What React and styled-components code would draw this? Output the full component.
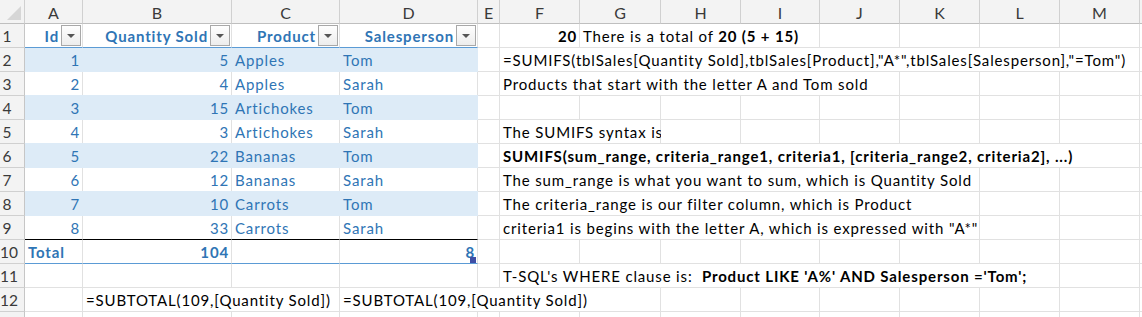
import React from 'react';
import styled, { createGlobalStyle } from 'styled-components';

const GRID = '#e1e1e1';
const BAND = '#ddebf7';
const BLUE = '#2f75b5';
const LINE_BLUE = '#5b9bd5';
const HEAD_BG = '#f3f3f3';
const HEAD_LINE = '#d0d0d0';
const FONT = 'Lato, "Open Sans", "Liberation Sans", sans-serif';

const COLS = [25, 58, 149, 108, 138, 22, 80, 81, 80, 79, 80, 80, 80, 80];
const LETTERS = ['A', 'B', 'C', 'D', 'E', 'F', 'G', 'H', 'I', 'J', 'K', 'L', 'M'];

const Global = createGlobalStyle`
  html, body { margin: 0; padding: 0; background: #fff; overflow: hidden; }
  body { font-family: ${FONT}; }
`;

const Sheet = styled.div`
  display: grid;
  grid-template-columns: ${COLS.map((c) => `${c}px`).join(' ')} 1fr;
  grid-auto-rows: 24px;
  width: 1142px;
  height: 317px;
  overflow: hidden;
  font-family: ${FONT};
`;

const Corner = styled.div`
  position: relative;
  box-sizing: border-box;
  background: ${HEAD_BG};
  border-right: 1px solid ${HEAD_LINE};
  border-bottom: 1px solid #bfbfbf;
  &::after {
    content: '';
    position: absolute;
    right: 3px;
    bottom: 3px;
    border-left: 14px solid transparent;
    border-bottom: 14px solid #d6d6d6;
  }
`;

const ColHead = styled.div`
  box-sizing: border-box;
  background: ${HEAD_BG};
  border-right: 1px solid ${(p) => (p.$last ? HEAD_BG : HEAD_LINE)};
  border-bottom: 1px solid #bfbfbf;
  color: #3a3a3a;
  font-size: 16px;
  line-height: 25px;
  text-align: center;
`;

const RowHead = styled.div`
  box-sizing: border-box;
  background: ${HEAD_BG};
  border-right: 1px solid #c6c6c6;
  border-bottom: 1px solid ${HEAD_LINE};
  color: #3a3a3a;
  font-size: 15.5px;
  line-height: 24px;
  padding-right: 10px;
  text-align: center;
`;

const Cell = styled.div`
  grid-column: span ${(p) => p.$span || 1};
  position: relative;
  box-sizing: border-box;
  min-width: 0;
  background: ${(p) => (p.$band ? BAND : '#fff')};
  border-right: 1px solid ${(p) => (p.$band ? BAND : p.$noRight ? '#fff' : GRID)};
  border-bottom: 1px solid ${(p) => p.$bottom || (p.$band ? BAND : GRID)};
  box-shadow: ${(p) => (p.$cover ? `0 -1px 0 ${BAND}` : 'none')};
  color: ${(p) => (p.$blue ? BLUE : '#000')};
  font-weight: ${(p) => (p.$bold ? 700 : 400)};
  font-size: 15px;
  letter-spacing: 0.85px;
  line-height: 23px;
  padding: 1px 2px 0 3px;
  text-align: ${(p) => p.$align || 'left'};
  white-space: pre;
`;

const HeadCell = styled(Cell)`
  display: flex;
  justify-content: flex-end;
  align-items: flex-start;
  padding: 0 1px 0 0;
`;

const HeadLabel = styled.span`
  padding-top: 1px;
`;

const FilterBtn = styled.span`
  flex-shrink: 0;
  box-sizing: border-box;
  width: 20px;
  height: 21px;
  margin: 1px 0 0 2px;
  border: 1px solid #a8a8a8;
  background: linear-gradient(#fefefe, #ededed);
  display: flex;
  align-items: center;
  justify-content: center;
  &::after {
    content: '';
    border-left: 4px solid transparent;
    border-right: 4px solid transparent;
    border-top: 4px solid #555;
  }
`;

const ResizeHandle = styled.span`
  position: absolute;
  right: 1px;
  bottom: 0;
  width: 6px;
  height: 6px;
  background: #3f4fa6;
`;

const Bold = styled.b`
  font-weight: 700;
`;

const data = [
  [1, 5, 'Apples', 'Tom'],
  [2, 4, 'Apples', 'Sarah'],
  [3, 15, 'Artichokes', 'Tom'],
  [4, 3, 'Artichokes', 'Sarah'],
  [5, 22, 'Bananas', 'Tom'],
  [6, 12, 'Bananas', 'Sarah'],
  [7, 10, 'Carrots', 'Tom'],
  [8, 33, 'Carrots', 'Sarah'],
];

const notes = {
  2: { span: 8, text: '=SUMIFS(tblSales[Quantity Sold],tblSales[Product],"A*",tblSales[Salesperson],"=Tom")' },
  3: { span: 5, text: 'Products that start with the letter A and Tom sold' },
  4: { span: 0 },
  5: { span: 2, text: 'The SUMIFS syntax is' },
  6: { span: 8, bold: true, text: 'SUMIFS(sum_range, criteria_range1, criteria1, [criteria_range2, criteria2], ...)' },
  7: { span: 6, text: 'The sum_range is what you want to sum, which is Quantity Sold' },
  8: { span: 6, text: 'The criteria_range is our filter column, which is Product' },
  9: { span: 6, text: 'criteria1 is begins with the letter A, which is expressed with "A*"' },
};

const empties = (n, key) =>
  Array.from({ length: n }, (_, i) => <Cell key={`${key}-${i}`} />);

const Filler = () => <Cell $noRight />;

export default function App() {
  const rows = [];

  rows.push(
    <React.Fragment key="r1">
      <RowHead>1</RowHead>
      {['Id', 'Quantity Sold', 'Product', 'Salesperson'].map((h) => (
        <HeadCell key={h} $blue $bold $bottom={LINE_BLUE}>
          <HeadLabel>{h}</HeadLabel>
          <FilterBtn />
        </HeadCell>
      ))}
      <Cell />
      <Cell $bold $align="right">20</Cell>
      <Cell $span={3}>
        There is a total of <Bold>20 (5 + 15)</Bold>
      </Cell>
      {empties(4, 'r1e')}
      <Filler />
    </React.Fragment>
  );

  data.forEach((d, i) => {
    const r = i + 2;
    const band = i % 2 === 0;
    const cover = band && i > 0;
    const bottom = r === 9 ? '#000' : undefined;
    const note = notes[r];
    const used = note.span || 0;
    rows.push(
      <React.Fragment key={`r${r}`}>
        <RowHead>{r}</RowHead>
        <Cell $band={band} $cover={cover} $bottom={bottom} $blue $align="right">{d[0]}</Cell>
        <Cell $band={band} $cover={cover} $bottom={bottom} $blue $align="right">{d[1]}</Cell>
        <Cell $band={band} $cover={cover} $bottom={bottom} $blue>{d[2]}</Cell>
        <Cell $band={band} $cover={cover} $bottom={bottom} $blue>{d[3]}</Cell>
        <Cell />
        {used > 0 && (
          <Cell $span={used} $bold={note.bold}>{note.text}</Cell>
        )}
        {empties(8 - used, `r${r}e`)}
        <Filler />
      </React.Fragment>
    );
  });

  rows.push(
    <React.Fragment key="r10">
      <RowHead>10</RowHead>
      <Cell $blue $bold $bottom={LINE_BLUE}>Total</Cell>
      <Cell $blue $bold $bottom={LINE_BLUE} $align="right">104</Cell>
      <Cell $bottom={LINE_BLUE} />
      <Cell $blue $bold $bottom={LINE_BLUE} $align="right">
        8
        <ResizeHandle />
      </Cell>
      {empties(9, 'r10e')}
      <Filler />
    </React.Fragment>
  );

  rows.push(
    <React.Fragment key="r11">
      <RowHead>11</RowHead>
      {empties(5, 'r11a')}
      <Cell $span={7}>
        T-SQL's WHERE clause is:  <Bold>Product LIKE 'A%' AND Salesperson ='Tom';</Bold>
      </Cell>
      <Cell />
      <Filler />
    </React.Fragment>
  );

  rows.push(
    <React.Fragment key="r12">
      <RowHead>12</RowHead>
      <Cell />
      <Cell $span={2}>=SUBTOTAL(109,[Quantity Sold])</Cell>
      <Cell $span={4}>=SUBTOTAL(109,[Quantity Sold])</Cell>
      {empties(6, 'r12e')}
      <Filler />
    </React.Fragment>
  );

  rows.push(
    <React.Fragment key="r13">
      <RowHead />
      {empties(13, 'r13e')}
      <Filler />
    </React.Fragment>
  );

  return (
    <>
      <Global />
      <Sheet>
        <Corner />
        {LETTERS.map((l) => (
          <ColHead key={l}>{l}</ColHead>
        ))}
        <ColHead $last />
        {rows}
      </Sheet>
    </>
  );
}
